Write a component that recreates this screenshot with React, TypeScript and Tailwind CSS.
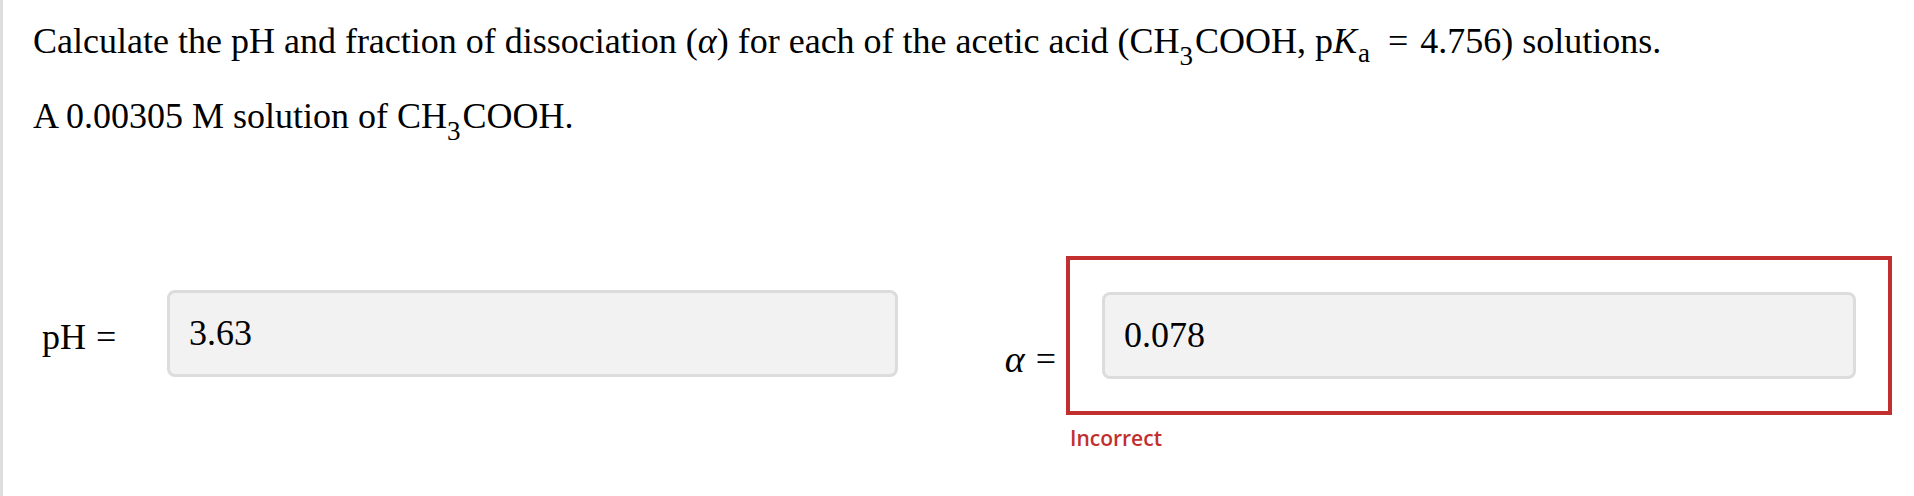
import React from "react";

const serif = { fontFamily: '"Liberation Serif", "Times New Roman", serif' };

function Sub({ children }: { children: React.ReactNode }) {
  return <span className="mr-[2px] text-[27px] leading-[0px] align-[-12px]">{children}</span>;
}

function Field({ value }: { value: string }) {
  return (
    <div
      className="flex h-[87px] items-center rounded-lg border-[3px] border-[#dcdcdc] bg-[#f2f2f2] pl-[19px] text-[36px] leading-[43px] text-black"
      style={serif}
    >
      {value}
    </div>
  );
}

export default function App() {
  return (
    <div
      className="min-h-[496px] w-full border-l-[3px] border-[#dedede] bg-white pl-[30px] pt-[20px] text-black"
      style={serif}
    >
      <p className="h-[43px] whitespace-nowrap text-[36px] leading-[43px]">
        Calculate the pH and fraction of dissociation (<i>α</i>) for each of the acetic acid (CH
        <Sub>3</Sub>COOH, p<i>K</i>
        <span className="ml-[1px] text-[27px] leading-[0px] align-[-9px]">a</span>
        <span className="ml-[18px] mr-[12px]">=</span>4.756) solutions.
      </p>
      <p className="mt-[32px] h-[43px] whitespace-nowrap text-[36px] leading-[43px]">
        A 0.00305 M solution of CH<Sub>3</Sub>COOH.
      </p>

      <div className="mt-[118px] flex items-start">
        <div className="mt-[34px] flex items-start">
          <div className="mt-[26px] w-[134px] pl-[9px] text-[36px] leading-[43px]">
            pH<span className="ml-[10px]">=</span>
          </div>
          <div className="w-[731px]">
            <Field value="3.63" />
          </div>
        </div>

        <div className="ml-[103px] flex items-start">
          <div className="mt-[82px] flex w-[65px] justify-end pr-[10px] text-[36px] leading-[43px]">
            <i className="text-[38px]">α</i>
            <span className="ml-[11px]">=</span>
          </div>
          <div className="w-[826px]">
            <div className="border-4 border-[#c12f2f] p-[32px]">
              <Field value="0.078" />
            </div>
            <div
              className="ml-[4px] mt-[9px] text-[21px] font-semibold leading-[28px] text-[#c12f2f]"
              style={{ fontFamily: '"Open Sans", "Noto Sans", sans-serif' }}
            >
              Incorrect
            </div>
          </div>
        </div>
      </div>
    </div>
  );
}
